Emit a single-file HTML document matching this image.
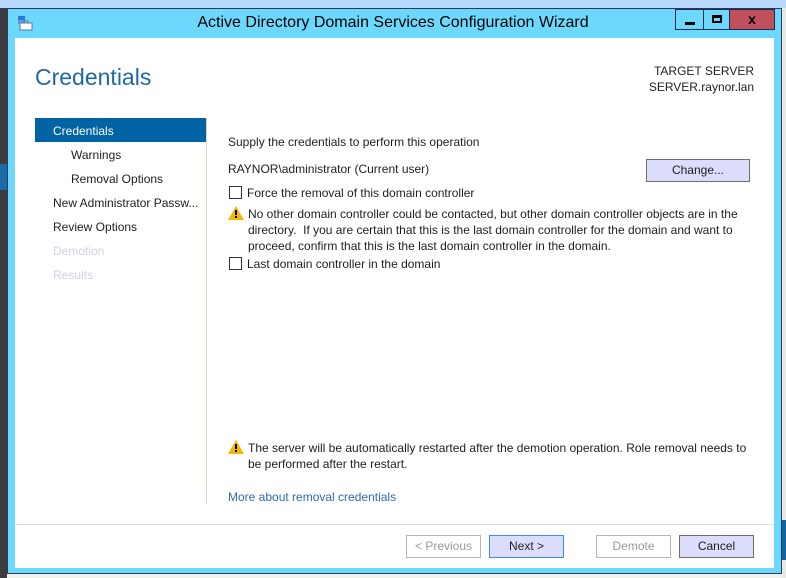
<!DOCTYPE html>
<html><head><meta charset="utf-8"><style>
*{margin:0;padding:0;box-sizing:border-box}
body{width:786px;height:578px;overflow:hidden;position:relative;background:#f0f0ec;font-family:"Liberation Sans",sans-serif;font-size:12px;color:#1e1e1e}
.a{position:absolute;white-space:nowrap}
.btn{position:absolute;height:23px;border:1px solid #707060;background:#dcdcfc;text-align:center;line-height:21px;font-size:12px}
.dis{background:#fff;border-color:#b8b8b0;color:#999}
.cb{position:absolute;width:13px;height:13px;border:1px solid #333;background:#fff}
</style></head><body>
<div class="a" style="left:0;top:0;width:786px;height:8px;background:#b7d8f8"></div>
<div class="a" style="left:0;top:8px;width:7px;height:570px;background:#3c3c40"></div>
<div class="a" style="left:0;top:164px;width:7px;height:26px;background:#1a6aa8"></div>
<div class="a" style="left:782px;top:8px;width:4px;height:570px;background:#e8e8e4"></div>
<div class="a" style="left:782px;top:520px;width:4px;height:40px;background:#1366a0"></div>
<div class="a" style="left:7px;top:8px;width:775px;height:566px;background:#6dd8fd;border:1px solid #2a3a5a"></div>
<svg class="a" style="left:17px;top:15px" width="17" height="16" viewBox="0 0 17 16"><rect x="1" y="1" width="7" height="4" fill="#2a7ad0"/><rect x="1" y="5" width="7" height="4" fill="#5aa0e0"/><rect x="3" y="8" width="12" height="7" fill="#fff" stroke="#5a7a9a"/><rect x="7" y="6" width="4" height="2" fill="none" stroke="#5a7a9a"/></svg>
<div class="a" style="left:0;width:786px;top:14px;text-align:center;font-size:16px;color:#000">Active Directory Domain Services Configuration Wizard</div>
<div class="a" style="left:675px;top:9px;width:29px;height:21px;border:1px solid #1e2a50;background:#6dd8fd"><div class="a" style="left:9px;top:12px;width:10px;height:3px;background:#000"></div></div>
<div class="a" style="left:703px;top:9px;width:27px;height:21px;border:1px solid #1e2a50;background:#6dd8fd"><div class="a" style="left:8px;top:5px;width:10px;height:8px;border:2px solid #000;border-top-width:3px"></div></div>
<div class="a" style="left:729px;top:9px;width:46px;height:21px;border:1px solid #1e2a50;background:#c0505a;text-align:center;font-weight:bold;font-size:14px;line-height:18px;color:#000">x</div>
<div class="a" style="left:15px;top:38px;width:759px;height:530px;background:#fff"></div>
<div class="a" style="left:35px;top:64px;font-size:23px;color:#1e6aa0">Credentials</div>
<div class="a" style="right:32px;top:63px;text-align:right;line-height:16px;color:#222">TARGET SERVER<br>SERVER.raynor.lan</div>
<div class="a" style="left:35px;top:118px;width:171px;height:24px;background:#0063a3"></div>
<div class="a" style="left:206px;top:118px;width:1px;height:386px;background:#d8d8c0"></div>
<div class="a" style="left:53px;top:124px;color:#fff">Credentials</div>
<div class="a" style="left:71px;top:148px">Warnings</div>
<div class="a" style="left:71px;top:172px">Removal Options</div>
<div class="a" style="left:53px;top:196px">New Administrator Passw...</div>
<div class="a" style="left:53px;top:220px">Review Options</div>
<div class="a" style="left:53px;top:244px;color:#cfcfe8">Demotion</div>
<div class="a" style="left:53px;top:268px;color:#cfcfe8">Results</div>
<div class="a" style="left:228px;top:135px">Supply the credentials to perform this operation</div>
<div class="a" style="left:228px;top:162px">RAYNOR\administrator (Current user)</div>
<div class="btn" style="left:646px;top:159px;width:104px">Change...</div>
<div class="cb" style="left:229px;top:186px"></div>
<div class="a" style="left:247px;top:186px">Force the removal of this domain controller</div>
<svg class="a" style="left:228px;top:206px" width="16" height="14" viewBox="0 0 16 14"><path d="M8 0L16 14H0Z" fill="#f5b800"/><rect x="7" y="4" width="2" height="5" fill="#000"/><rect x="7" y="10" width="2" height="2" fill="#000"/></svg>
<div class="a" style="left:248px;top:206px;line-height:16px">No other domain controller could be contacted, but other domain controller objects are in the<br>directory.&nbsp; If you are certain that this is the last domain controller for the domain and want to<br>proceed, confirm that this is the last domain controller in the domain.</div>
<div class="cb" style="left:229px;top:257px"></div>
<div class="a" style="left:247px;top:257px">Last domain controller in the domain</div>
<svg class="a" style="left:228px;top:440px" width="16" height="14" viewBox="0 0 16 14"><path d="M8 0L16 14H0Z" fill="#f5b800"/><rect x="7" y="4" width="2" height="5" fill="#000"/><rect x="7" y="10" width="2" height="2" fill="#000"/></svg>
<div class="a" style="left:248px;top:440px;line-height:16px">The server will be automatically restarted after the demotion operation. Role removal needs to<br>be performed after the restart.</div>
<div class="a" style="left:228px;top:490px;color:#2a6cb0">More about removal credentials</div>
<div class="a" style="left:15px;top:524px;width:759px;height:1px;background:#dcdcf8"></div>
<div class="btn dis" style="left:406px;top:535px;width:75px">&lt; Previous</div>
<div class="btn" style="left:489px;top:535px;width:75px;border-color:#3a90e0">Next &gt;</div>
<div class="btn dis" style="left:596px;top:535px;width:75px">Demote</div>
<div class="btn" style="left:679px;top:535px;width:75px">Cancel</div>
</body></html>
